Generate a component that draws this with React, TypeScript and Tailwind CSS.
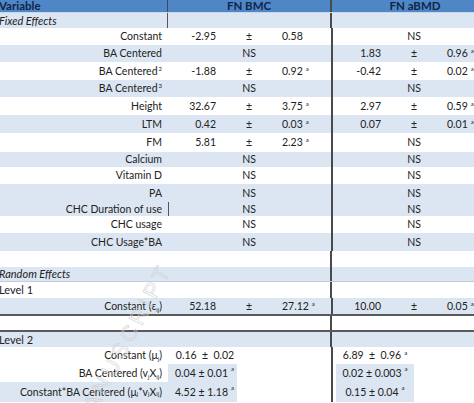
import React from "react"

const BLUE = "bg-[#dce6f2]"

function Sup({ children, tight }: { children: React.ReactNode; tight?: boolean }) {
  return (
    <sup className={`text-[6px] ${tight ? "ml-[1px]" : "ml-[3px]"} -top-[4px] relative align-baseline`}>{children}</sup>
  )
}

function Sub({ children }: { children: React.ReactNode }) {
  return <sub className="text-[6px] align-baseline relative top-[2px]">{children}</sub>
}

type Fixed = {
  label: React.ReactNode
  bmc: [string, string, React.ReactNode] | "NS"
  bmd: [string, string, React.ReactNode] | "NS"
  h: string
  shade: boolean
  tick?: boolean
}

const a = <Sup>a</Sup>

const fixed: Fixed[] = [
  { label: "Constant", bmc: ["-2.95", "±", "0.58"], bmd: "NS", h: "h-[17px]", shade: false },
  { label: "BA Centered", bmc: "NS", bmd: ["1.83", "±", <>0.96{a}</>], h: "h-[17px]", shade: true },
  {
    label: <>BA Centered<Sup tight>2</Sup></>,
    bmc: ["-1.88", "±", <>0.92{a}</>],
    bmd: ["-0.42", "±", <>0.02{a}</>],
    h: "h-[18px]",
    shade: false,
  },
  { label: <>BA Centered<Sup tight>3</Sup></>, bmc: "NS", bmd: "NS", h: "h-[17px]", shade: true },
  { label: "Height", bmc: ["32.67", "±", <>3.75{a}</>], bmd: ["2.97", "±", <>0.59{a}</>], h: "h-[18px]", shade: false },
  { label: "LTM", bmc: ["0.42", "±", <>0.03{a}</>], bmd: ["0.07", "±", <>0.01{a}</>], h: "h-[18px]", shade: true },
  { label: "FM", bmc: ["5.81", "±", <>2.23{a}</>], bmd: "NS", h: "h-[19px]", shade: false },
  { label: "Calcium", bmc: "NS", bmd: "NS", h: "h-[15px]", shade: true },
  { label: "Vitamin D", bmc: "NS", bmd: "NS", h: "h-[17px]", shade: false },
  { label: "PA", bmc: "NS", bmd: "NS", h: "h-[18px]", shade: true },
  { label: "CHC Duration of use", bmc: "NS", bmd: "NS", h: "h-[14px]", shade: true, tick: true },
  { label: "CHC usage", bmc: "NS", bmd: "NS", h: "h-[17px]", shade: false },
  { label: "CHC Usage*BA", bmc: "NS", bmd: "NS", h: "h-[18px]", shade: true },
]

function Triple({ v, tick }: { v: Fixed["bmc"]; tick?: boolean }) {
  return (
    <div className={`flex h-full w-full items-center ${tick ? "border-l border-[#555]" : ""}`}>
      <div className={`${tick ? "w-[47px]" : "w-[48px]"} text-right`}>{v === "NS" ? "" : v[0]}</div>
      <div className="w-[66px] text-center">{v === "NS" ? "NS" : v[1]}</div>
      <div className="flex-1 whitespace-nowrap">{v === "NS" ? "" : v[2]}</div>
    </div>
  )
}

function Row({
  h,
  shade,
  label,
  left,
  right,
  extra = "",
}: {
  h: string
  shade?: boolean
  label?: React.ReactNode
  left?: React.ReactNode
  right?: React.ReactNode
  extra?: string
}) {
  return (
    <div className={`flex items-center ${h} ${shade ? BLUE : "bg-white"} ${extra}`}>
      <div className="w-[168px] pr-[6px] text-right whitespace-nowrap">{label}</div>
      <div className="w-[163px] h-full flex items-center">{left}</div>
      <div className="w-[2px] h-full bg-[#4a4a4a]" />
      <div className="flex-1 h-full flex items-center">{right}</div>
    </div>
  )
}

function Section({ h, shade, text, extra = "" }: { h: string; shade?: boolean; text?: React.ReactNode; extra?: string }) {
  return (
    <div className={`flex items-center ${h} ${shade ? BLUE : "bg-white"} ${extra}`}>
      <div className="w-[331px] -ml-[1px] whitespace-nowrap">{text}</div>
      <div className="w-[2px] h-full bg-[#4a4a4a]" />
      <div className="flex-1" />
    </div>
  )
}

export default function App() {
  return (
    <div
      className="relative w-[474px] h-[403px] overflow-hidden bg-white text-[10.5px] leading-none text-[#222]"
      style={{ fontFamily: "Lato, 'Open Sans', sans-serif" }}
    >
      {/* header */}
      <div className="flex h-[12px] bg-[#4f86c6] text-[11.5px] font-bold text-[#10254a] items-center">
        <div className="w-[168px] -ml-[1px]">Variable</div>
        <div className="w-[1px] h-full bg-[#3a4a60]" />
        <div className="w-[162px] text-center">FN BMC</div>
        <div className="w-[2px] h-full bg-[#4a4a4a]" />
        <div className="flex-1 text-center pl-[24px]">FN aBMD</div>
      </div>
      <div className={`flex items-center h-[16px] ${BLUE} border-t border-[#c9d7ea]`}>
        <div className="w-[168px] -ml-[1px] italic text-[11px]">Fixed Effects</div>
        <div className="w-[1px] h-full bg-[#555]" />
        <div className="w-[162px]" />
        <div className="w-[2px] h-full bg-[#4a4a4a]" />
        <div className="flex-1" />
      </div>

      {fixed.map((r, i) => (
        <Row
          key={i}
          h={r.h}
          shade={r.shade}
          label={r.label}
          left={<Triple v={r.bmc} tick={r.tick} />}
          right={<Triple v={r.bmd} />}
        />
      ))}

      <Section h="h-[16px]" />
      <Section
        h="h-[15px]"
        shade
        text={<span className="italic text-[11px]">Random Effects</span>}
        extra="border-b border-[#c6ccd6]"
      />
      <Section h="h-[16px]" text={<span className="text-[11px]">Level 1</span>} />
      <Row
        h="h-[18px]"
        shade
        label={<>Constant (ε<Sub>ij</Sub>)</>}
        left={<Triple v={["52.18", "±", <>27.12{a}</>]} />}
        right={<Triple v={["10.00", "±", <>0.05{a}</>]} />}
        extra="border-b-2 border-[#5a5a5a]"
      />
      <Section h="h-[16px]" extra="border-b-2 border-[#5a5a5a]" />
      <Section h="h-[15px]" shade text={<span className="text-[11px]">Level 2</span>} />
      <Row
        h="h-[17px]"
        label={<>Constant (μ<Sub>j</Sub>)</>}
        left={<div className="w-[69px] text-center pl-[5px]">0.16 &nbsp;±&nbsp; 0.02</div>}
        right={<div className="ml-[3px] w-[78px] text-center">6.89 &nbsp;±&nbsp; 0.96{a}</div>}
      />
      <Row
        h="h-[18px]"
        label={<>BA Centered (v<Sub>j</Sub>X<Sub>ij</Sub>)</>}
        left={
          <div className={`w-[69px] h-full flex items-center justify-center pl-[4px] ${BLUE}`}>0.04 ± 0.01{a}</div>
        }
        right={
          <div className={`ml-[3px] w-[78px] h-full flex items-center justify-center ${BLUE}`}>0.02 ± 0.003{a}</div>
        }
      />
      <div className="flex items-center h-[20px] bg-white">
        <div className={`w-[168px] h-full flex items-center justify-end pr-[6px] whitespace-nowrap ${BLUE}`}>
          Constant*BA Centered (μ<Sub>j</Sub>*v<Sub>j</Sub>X<Sub>ij</Sub>)
        </div>
        <div className="w-[163px] h-full flex items-center">
          <div className={`w-[69px] h-full flex items-center justify-center pl-[4px] ${BLUE}`}>4.52 ± 1.18{a}</div>
        </div>
        <div className="w-[2px] h-full bg-[#4a4a4a]" />
        <div className="flex-1 h-full flex items-center">
          <div className={`ml-[3px] w-[78px] h-full flex items-center justify-center ${BLUE}`}>0.15 ± 0.04{a}</div>
        </div>
      </div>

      {/* faint watermark */}
      <div
        aria-hidden="true"
        className="pointer-events-none absolute left-[30px] top-[336px] origin-center -rotate-[62deg] text-[22px] tracking-[4px] text-transparent whitespace-nowrap [-webkit-text-stroke:0.6px_#d0d0d0]"
        style={{ fontFamily: "'Liberation Sans', sans-serif" }}
      >
        MANUSCRIPT
      </div>
    </div>
  )
}
